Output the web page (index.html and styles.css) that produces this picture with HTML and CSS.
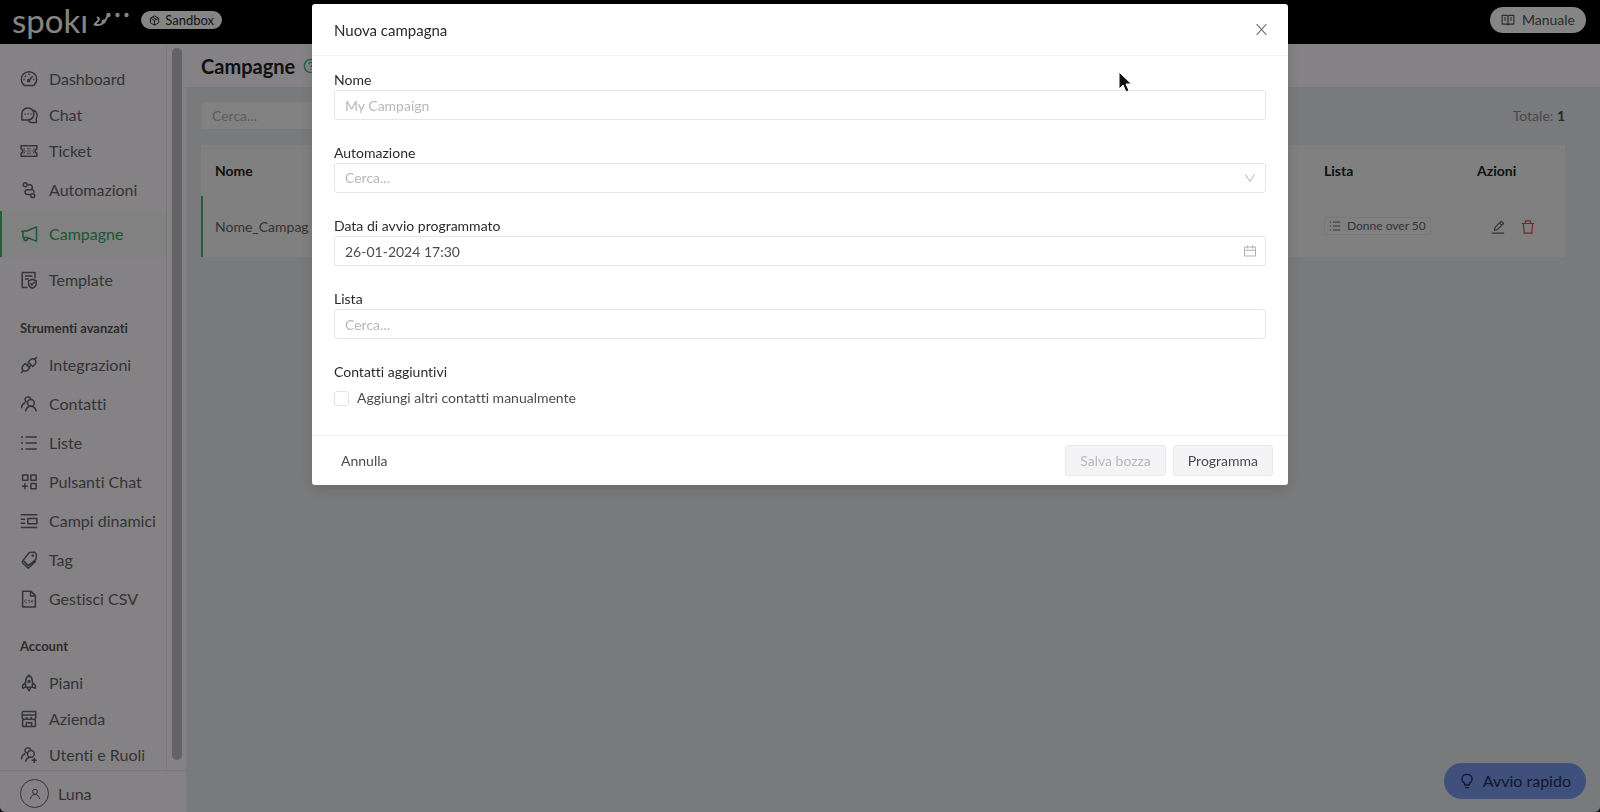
FILE: index.html
```html
<!DOCTYPE html>
<html lang="it">
<head>
    <meta charset="UTF-8">
    <meta name="viewport" content="width=device-width, initial-scale=1.0">
    <title>Campagne - Spoki</title>
    <link rel="stylesheet" href="styles.css">
</head>
<body>
    <div class="app">
        <header class="topbar">
            <a class="logo" href="#" aria-label="Spoki">
                <span class="logo-text">spokı</span>
                <svg class="logo-mark" viewBox="0 0 36 18" fill="none" stroke="currentColor">
                    <path d="M4.500 6.500C6.500 7 6.500 8.500 4.500 10.500L1.500 13.500C6 15 11 13 11 9.500C9 9.500 9 12 11 11.500C12.500 10 13 8 14.500 5" stroke-width="2" stroke-linecap="round" stroke-linejoin="round"/>
                    <g fill="currentColor" stroke="none"><circle cx="15.500" cy="4" r="2.200"/><circle cx="24.500" cy="4" r="2.200"/><circle cx="33.500" cy="4" r="2.200"/></g>
                </svg>
            </a>
            <span class="sandbox">
                <svg class="icon" viewBox="0 0 24 24"><path d="M12 2l9 5v10l-9 5-9-5V7zM3 7l9 5 9-5M12 12v10M7.500 4.500l9 5"/></svg>
                Sandbox
            </span>
            <button class="manual" type="button">
                <svg class="icon" viewBox="0 0 24 24"><path d="M12 5.500L10 4H2v15h8l2 1.500 2-1.500h8V4h-8zM12 5.500v15M5 8.500h4M5 12h4M15 8.500h4M15 12h4"/></svg>
                Manuale
            </button>
        </header>

        <div class="layout">
            <aside class="sidebar">
                <div class="sidebar-scroll">
                    <nav class="menu">
                        <div class="menu-group">
                            <a class="menu-item" href="#">
                                <svg class="icon" viewBox="0 0 24 24"><path d="M5.500 20.500a10.300 10.300 0 1 1 13 0zM12 14l5-6M12 4.500v2M4.500 12.500h2M17.500 12.500h2M6.500 7.500l1.500 1.500"/><circle cx="11.500" cy="14" r="1.500"/></svg>
                                Dashboard
                            </a>
                            <a class="menu-item" href="#">
                                <svg class="icon" viewBox="0 0 24 24"><path d="M2.500 18.500v-8A8 8 0 1 1 10.500 18.500zM18.500 5.500c5 3 5 8 3 11.500l.5 5h-6c-2 0-4-1-5-2.500M18.500 10c0 5-3 8-7 9M6 10.500h1.500M10 10.500h1.500M14 10.500h1.500"/></svg>
                                Chat
                            </a>
                            <a class="menu-item" href="#">
                                <svg class="icon" viewBox="0 0 24 24"><path d="M1.500 5h21v4.500a2.500 2.500 0 0 0 0 5V19h-21v-4.500a2.500 2.500 0 0 0 0-5z"/><path class="thin" d="M5 8l2 4-2 4M19 8l-2 4 2 4M9 9h6M9 12h6M9 15h6"/></svg>
                                Ticket
                            </a>
                            <a class="menu-item item-flow" href="#">
                                <svg class="icon" viewBox="0 0 24 24"><circle cx="7" cy="5" r="2.600"/><circle cx="17" cy="19.500" r="2.600"/><path d="M9.700 5H13a3.500 3.500 0 0 1 3.500 4c0 2-1.500 2.500-3 2.500H10a3.200 3.200 0 0 0 0 6.500h4.400M13 11.500h3a3 3 0 0 1 2.500 4"/></svg>
                                Automazioni
                            </a>
                            <a class="menu-item item-large active" href="#">
                                <svg class="icon" viewBox="0 0 24 24"><path d="M22 2.500v19L9 16.500H4V8h5zM5 17c0 5 5 5 5.500.5M4 8.500L1.500 9"/></svg>
                                Campagne
                            </a>
                            <a class="menu-item item-large" href="#">
                                <svg class="icon" viewBox="0 0 24 24"><path d="M10 22H3V2h17v8M6.500 6.500h10M6.500 10.500h5M16.500 11l5 2v4c0 3-2.500 5-5 6-2.500-1-5-3-5-6v-4zM14 16.500l2 2 3.500-4"/></svg>
                                Template
                            </a>
                        </div>

                        <h2 class="menu-title">Strumenti avanzati</h2>
                        <div class="menu-group tools">
                            <a class="menu-item" href="#">
                                <svg class="icon" viewBox="0 0 24 24"><path d="M11 8l3-3c2-2 4.500-1.500 6 0s2 4 0 6l-3 3zM13 16l-3 3c-2 2-4.500 1.500-6 0s-2-4 0-6l3-3zM19.500 4.500L22.500 1.500M4.500 19.500L1.500 22.500M9.500 12l2-2M12 14.500l2-2"/></svg>
                                Integrazioni
                            </a>
                            <a class="menu-item" href="#">
                                <svg class="icon" viewBox="0 0 24 24"><circle cx="14.500" cy="10.500" r="4.500"/><path d="M7.500 22c.5-4 3-7 7-7s6.500 3 7 7M10 9.500c-3-.5-4-3-3-5s5-3.500 7.500.5M2 17.500c0-4 2-6 5-7.500"/></svg>
                                Contatti
                            </a>
                            <a class="menu-item" href="#">
                                <svg class="icon" viewBox="0 0 24 24"><path d="M7.500 4H22.500M7.500 12H22.500M7.500 20H22.500M1.500 4h2.500M1.500 12h2.500M1.500 20h2.500"/></svg>
                                Liste
                            </a>
                            <a class="menu-item" href="#">
                                <svg class="icon" viewBox="0 0 24 24"><path d="M3.500 2.500h7v7h-7zM14.500 2.500h7v7h-7zM14.500 14h7v7h-7zM6.500 13.500v8M2.500 17.500h8"/></svg>
                                Pulsanti Chat
                            </a>
                            <a class="menu-item" href="#">
                                <svg class="icon" viewBox="0 0 24 24"><path d="M1 3.500h22M1 20.500h22M10.500 8.500h12v7h-12zM1 9.500h6M1 15h6"/></svg>
                                Campi dinamici
                            </a>
                            <a class="menu-item" href="#">
                                <svg class="icon" viewBox="0 0 24 24"><path d="M12.500 2l7-.5 2.500 3-1 7-10 8-7-7zM2.500 15l8.500 8 10-9.500M2.500 15l2-2.500"/><circle cx="17" cy="6" r=".8"/></svg>
                                Tag
                            </a>
                            <a class="menu-item" href="#">
                                <svg class="icon" viewBox="0 0 24 24"><path d="M3.500 1.500h11l6 6v15h-17zM14 2v6h6.500"/><path class="thin" d="M9.500 14c-2-2-3.500-.5-3.500 1s1.500 2.500 3.500 1M13 13.500c-2-.5-2 1-.5 1.500s1 2-1 1.500M14.500 13.500l1.500 3 1.500-3"/></svg>
                                Gestisci CSV
                            </a>
                        </div>

                        <h2 class="menu-title title-account">Account</h2>
                        <div class="menu-group">
                            <a class="menu-item" href="#">
                                <svg class="icon" viewBox="0 0 24 24"><path d="M12 1.500c3.500 2.500 4.500 5.500 4.500 8v8h-9v-8c0-2.500 1-5.500 4.500-8zM7.500 11.500l-4 3.500v4l4-1.500M16.500 11.500l4 3.500v4l-4-1.500M9.500 18l2.500 4.500 2.500-4.500"/><circle cx="12" cy="10" r="1.200"/></svg>
                                Piani
                            </a>
                            <a class="menu-item" href="#">
                                <svg class="icon" viewBox="0 0 24 24"><path d="M3 2h18v8M3 2v8M3 6.500h18M3 10c0 3.500 6 3.500 6 0 0 3.500 6 3.500 6 0 0 3.500 6 3.500 6 0M3.500 13v9h17v-9M8.500 22v-5h7v5"/></svg>
                                Azienda
                            </a>
                            <a class="menu-item" href="#">
                                <svg class="icon" viewBox="0 0 24 24"><circle cx="14.500" cy="10.500" r="4.500"/><path d="M7.500 21c.5-4 3-6 7-6M10 9.500c-3-.5-4-3-3-5s5-3.500 7.500.5M2 17.500c0-4 2-6 5-7.500M19 15.500v7M15.500 19h7"/></svg>
                                Utenti e Ruoli
                            </a>
                        </div>
                    </nav>
                    <div class="scroll-track"><div class="scroll-thumb"></div></div>
                </div>
                <div class="user">
                    <span class="avatar">
                        <svg class="icon" viewBox="0 0 24 24"><circle cx="12" cy="7.500" r="5"/><path d="M3 22c0-5 4-9 9-9s9 4 9 9"/></svg>
                    </span>
                    Luna
                </div>
            </aside>

            <main class="content">
                <div class="page-header">
                    <h1>Campagne</h1>
                    <svg class="icon help" viewBox="0 0 24 24"><circle cx="12" cy="12" r="10"/><path d="M9 9.500c0-4 6-4 6 0 0 2-3 2-3 4.500M12 17v1"/></svg>
                </div>
                <div class="page-body">
                    <div class="toolbar">
                        <input class="search" type="text" placeholder="Cerca..." aria-label="Cerca campagna">
                        <span class="total">Totale: <b>1</b></span>
                    </div>
                    <table class="campaigns">
                        <thead>
                            <tr><th>Nome</th><th class="col-list">Lista</th><th class="col-actions">Azioni</th></tr>
                        </thead>
                        <tbody>
                            <tr>
                                <td>Nome_Campag</td>
                                <td>
                                    <span class="tag">
                                        <svg class="icon" viewBox="0 0 24 24"><path d="M7.500 4H22.500M7.500 12H22.500M7.500 20H22.500M1.500 4h2.500M1.500 12h2.500M1.500 20h2.500"/></svg>
                                        Donne over 50
                                    </span>
                                </td>
                                <td>
                                    <div class="actions">
                                        <button type="button" aria-label="Modifica">
                                            <svg class="icon" viewBox="0 0 24 24"><path d="M1.500 22.500h21M6 17.500l1-5L17.500 2l4 4L11 16.500zM14.500 5l4 4"/></svg>
                                        </button>
                                        <button class="delete" type="button" aria-label="Elimina">
                                            <svg class="icon" viewBox="0 0 24 24"><path d="M1.500 6h21M4 6l1.500 16.500h13L20 6M7.500 6V1.500h9V6"/></svg>
                                        </button>
                                    </div>
                                </td>
                            </tr>
                        </tbody>
                    </table>
                </div>
            </main>
        </div>

        <button class="quick-start" type="button">
            <svg class="icon" viewBox="0 0 24 24"><path d="M8.500 18v-2.500C2 12 3.500 2 12 2s10 10 3.500 13.500V18zM9 22h6"/></svg>
            Avvio rapido
        </button>
    </div>

    <div class="overlay">
        <form class="modal" role="dialog" aria-labelledby="modalTitle">
            <div class="modal-header">
                <h2 id="modalTitle">Nuova campagna</h2>
                <button class="close" type="button" aria-label="Chiudi">
                    <svg class="icon" viewBox="0 0 24 24"><path d="M3 2l18 20M21 2L3 22"/></svg>
                </button>
            </div>
            <div class="modal-body">
                <div class="field">
                    <label for="name">Nome</label>
                    <input class="control" id="name" type="text" placeholder="My Campaign">
                </div>
                <div class="field">
                    <label for="automation">Automazione</label>
                    <div class="control-wrap">
                        <select class="control empty" id="automation">
                            <option>Cerca...</option>
                        </select>
                        <svg class="icon" viewBox="0 0 24 24"><path d="M3 5l9 14 9-14"/></svg>
                    </div>
                </div>
                <div class="field">
                    <label for="startDate">Data di avvio programmato</label>
                    <div class="control-wrap">
                        <input class="control" id="startDate" type="text" value="26-01-2024 17:30">
                        <svg class="icon" viewBox="0 0 24 24"><path d="M1 4h22v18H1zM1 10.500h22M7 1v6M17 1v6"/></svg>
                    </div>
                </div>
                <div class="field">
                    <label for="list">Lista</label>
                    <input class="control" id="list" type="text" placeholder="Cerca...">
                </div>
                <fieldset class="field">
                    <legend>Contatti aggiuntivi</legend>
                    <label class="check"><input type="checkbox"> Aggiungi altri contatti manualmente</label>
                </fieldset>
            </div>
            <div class="modal-footer">
                <button class="btn btn-text" type="button">Annulla</button>
                <button class="btn" type="button" disabled>Salva bozza</button>
                <button class="btn" type="submit">Programma</button>
            </div>
        </form>
    </div>

    <svg class="cursor" viewBox="0 0 14 22"><path d="M1 1v17l4-4 3 7 3-1.500-3-6.500h5.500z" fill="#111" stroke="#fff" stroke-width="1"/></svg>
</body>
</html>
```

FILE: styles.css
```css
* {
    box-sizing: border-box;
}
body {
    margin: 0;
    background: #000;
    color: #66646a;
    font-family: Lato, "Liberation Sans", sans-serif;
    font-size: 14px;
    line-height: 20px;
    font-variant-ligatures: none;
}
button, input, select {
    font: inherit;
    color: inherit;
}
button {
    padding: 0;
    border: 0;
    background: none;
    cursor: pointer;
}
h1, h2 {
    margin: 0;
}
a {
    color: inherit;
    text-decoration: none;
}
.icon {
    width: 18px;
    height: 18px;
    flex: none;
    fill: none;
    stroke: currentColor;
    stroke-width: 2;
    stroke-linejoin: round;
}
.icon .thin {
    stroke-width: 1;
}

/* Page */
.app {
    display: flex;
    flex-direction: column;
    height: 100vh;
    overflow: hidden;
}
.topbar {
    display: flex;
    align-items: center;
    height: 44px;
    flex: none;
    padding: 0 14px 4px 12px;
    background: #000;
}
.logo {
    display: flex;
    align-items: center;
    color: #fff;
}
.logo-text {
    font-size: 33px;
    line-height: 32px;
}
.logo-mark {
    width: 36px;
    height: 18px;
    margin: 0 12px 0 5px;
}
.sandbox {
    display: flex;
    align-items: center;
    gap: 5px;
    height: 18px;
    padding: 0 8px;
    border-radius: 9px;
    background: #fff;
    color: #2a2a2a;
    font-size: 13px;
}
.sandbox .icon {
    width: 11px;
    height: 11px;
}
.manual {
    display: flex;
    align-items: center;
    gap: 7px;
    height: 26px;
    margin-left: auto;
    padding: 0 11px;
    border-radius: 13px;
    background: #fff;
    color: #555;
    font-size: 14px;
}
.manual .icon {
    width: 14px;
    height: 14px;
}
.layout {
    display: flex;
    flex: 1;
    min-height: 0;
}

/* Sidebar */
.sidebar {
    display: flex;
    flex-direction: column;
    width: 186px;
    flex: none;
    background: #fdfafd;
    border-radius: 0 0 0 5px;
}
.sidebar-scroll {
    display: flex;
    flex: 1;
    min-height: 0;
}
.menu {
    flex: 1;
    padding-top: 17px;
    overflow: hidden;
    border-right: 1px solid #eae8ea;
}
.menu-item {
    display: flex;
    align-items: center;
    gap: 11px;
    height: 36px;
    padding-left: 20px;
    font-size: 16px;
    white-space: nowrap;
}
.item-flow {
    height: 42px;
}
.item-large {
    height: 46px;
}
.tools .menu-item {
    height: 39px;
}
.menu-item.active {
    padding-left: 18px;
    border-left: 2px solid #3cb868;
    background: #faf7fa;
    color: #32a862;
}
.menu-title {
    height: 42px;
    padding: 15px 0 0 20px;
    color: #58565a;
    font-size: 13px;
    line-height: 20px;
}
.title-account {
    height: 47px;
    padding-top: 18px;
}
.scroll-track {
    width: 19px;
    padding: 4px 4px 10px 5px;
}
.scroll-thumb {
    height: 100%;
    border-radius: 5px;
    background: #bebcc0;
}
.user {
    display: flex;
    align-items: center;
    gap: 9px;
    height: 42px;
    padding: 4px 20px 0;
    border-top: 1px solid #e8e6e8;
    font-size: 16px;
}
.avatar {
    display: flex;
    align-items: center;
    justify-content: center;
    width: 29px;
    height: 29px;
    border: 1px solid #66646a;
    border-radius: 50%;
}
.avatar .icon {
    width: 12px;
    height: 12px;
}

/* Content */
.content {
    flex: 1;
    min-width: 0;
    background: #e8eaec;
    border-radius: 0 0 5px 0;
}
.page-header {
    display: flex;
    align-items: center;
    gap: 8px;
    height: 43px;
    padding-left: 15px;
    background: #fdfafd;
    color: #222;
}
.page-header h1 {
    font-size: 20px;
    line-height: 24px;
}
.help {
    width: 16px;
    height: 16px;
    color: #3cb98c;
}
.page-body {
    padding: 14px 35px 0 15px;
}
.toolbar {
    display: flex;
    align-items: center;
    justify-content: space-between;
    height: 29px;
    margin-bottom: 15px;
}
.search {
    width: 260px;
    height: 29px;
    padding: 0 10px;
    border: 1px solid #e8e8ea;
    border-radius: 4px;
    background: #f8f7f8;
}
.search::placeholder {
    color: #b2b2b4;
    opacity: 1;
}
.total {
    color: #8c8c90;
}
.total b {
    color: #505054;
}
.campaigns {
    width: 100%;
    border-collapse: collapse;
    table-layout: fixed;
    background: #f5f5f7;
}
.campaigns th {
    height: 51px;
    padding: 0 14px;
    color: #222;
    font-size: 14px;
    text-align: left;
}
.campaigns td {
    height: 61px;
    padding: 0 14px;
}
.campaigns td:first-child {
    box-shadow: inset 2px 0 #3cb868;
}
.campaigns .col-list {
    width: 153px;
}
.campaigns .col-actions {
    width: 102px;
}
.tag {
    display: inline-flex;
    align-items: center;
    gap: 6px;
    height: 18px;
    padding: 0 4px;
    border: 1px solid #e6e4e8;
    border-radius: 2px;
    font-size: 12px;
    white-space: nowrap;
}
.tag .icon {
    width: 12px;
    height: 12px;
}
.actions {
    display: flex;
    gap: 16px;
    padding-left: 14px;
}
.actions button {
    display: flex;
}
.actions .icon {
    width: 14px;
    height: 14px;
}
.delete {
    color: #e04858;
}
.quick-start {
    position: absolute;
    right: 14px;
    bottom: 13px;
    display: flex;
    align-items: center;
    gap: 8px;
    height: 36px;
    padding: 0 15px;
    border-radius: 18px;
    background: #7899ec;
    color: #262f58;
    font-size: 16px;
}
.quick-start .icon {
    width: 16px;
    height: 18px;
}

/* Modal */
.overlay {
    position: fixed;
    inset: 0;
    padding-top: 4px;
    background: rgba(0, 0, 0, 0.48);
}
.modal {
    width: 61vw;
    margin: 0 auto;
    border-radius: 3px;
    background: #fff;
    color: #4c4c4e;
    box-shadow: 0 4px 14px rgba(0, 0, 0, 0.15);
}
.modal-header {
    display: flex;
    align-items: center;
    justify-content: space-between;
    height: 52px;
    padding: 0 20px 0 22px;
    border-bottom: 1px solid #f3f2f4;
    color: #2a2a2c;
}
.modal-header h2 {
    font-size: 15px;
    font-weight: normal;
}
.close {
    display: flex;
    color: #707074;
}
.close .icon {
    width: 13px;
    height: 13px;
}
.modal-body {
    padding: 14px 22px 0;
}
.field {
    height: 73px;
    margin: 0;
    padding: 0;
    border: 0;
}
.field label,
.field legend {
    display: block;
    padding: 0;
    color: #2a2a2c;
}
.control {
    display: block;
    width: 100%;
    height: 30px;
    padding: 0 10px;
    border: 1px solid #e6e5e8;
    border-radius: 3px;
    background: #fff;
    appearance: none;
}
.control::placeholder,
.control.empty {
    color: #b8b8ba;
    opacity: 1;
}
.control-wrap {
    position: relative;
}
.control-wrap .icon {
    position: absolute;
    top: 9px;
    right: 10px;
    width: 12px;
    height: 12px;
    color: #b0b0b4;
    pointer-events: none;
}
.field .check {
    display: flex;
    align-items: center;
    gap: 8px;
    margin-top: 6px;
    color: #4c4c4e;
}
.check input {
    width: 15px;
    height: 15px;
    margin: 0;
    border: 1px solid #e4e2e8;
    border-radius: 3px;
    appearance: none;
}
.modal-footer {
    display: flex;
    align-items: center;
    gap: 7px;
    height: 50px;
    padding: 0 15px 0 22px;
    border-top: 1px solid #f3f2f4;
}
.btn {
    height: 31px;
    padding: 0 14px;
    border: 1px solid #e8e7ea;
    border-radius: 3px;
    background: #f4f3f5;
}
.btn:disabled {
    color: #b8b8ba;
}
.btn-text {
    margin-right: auto;
    padding: 0 7px;
    border: 0;
    background: none;
}
.cursor {
    position: fixed;
    top: 71px;
    left: 1118px;
    width: 14px;
    height: 22px;
}
```
